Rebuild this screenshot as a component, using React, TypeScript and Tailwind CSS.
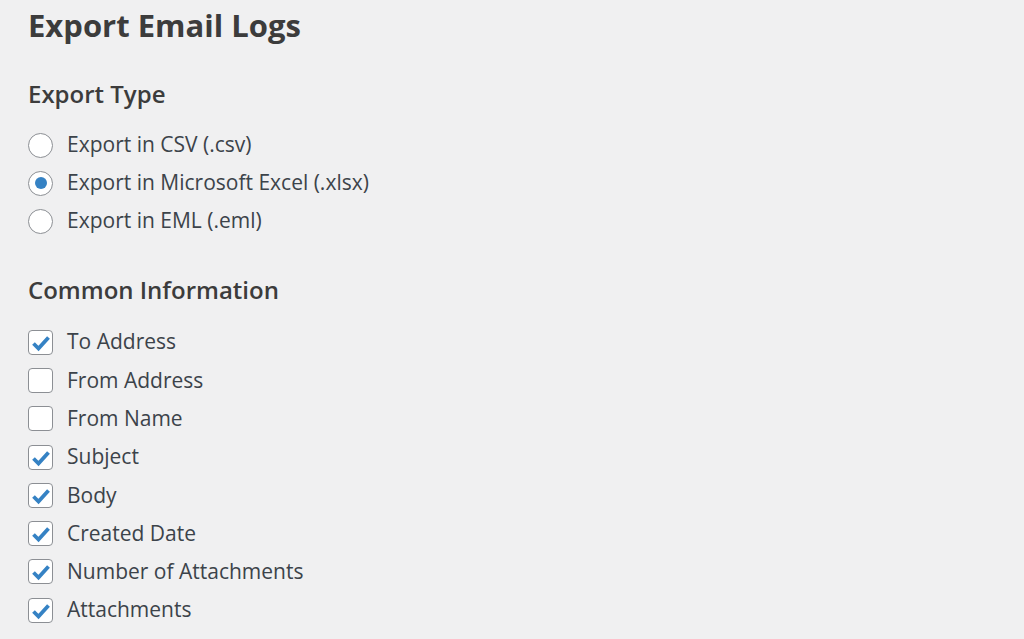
const exportTypes = [
  { id: 'csv', label: 'Export in CSV (.csv)' },
  { id: 'xlsx', label: 'Export in Microsoft Excel (.xlsx)' },
  { id: 'eml', label: 'Export in EML (.eml)' },
];

const commonFields = [
  { label: 'To Address', checked: true },
  { label: 'From Address', checked: false },
  { label: 'From Name', checked: false },
  { label: 'Subject', checked: true },
  { label: 'Body', checked: true },
  { label: 'Created Date', checked: true },
  { label: 'Number of Attachments', checked: true },
  { label: 'Attachments', checked: true },
];

function Radio({ checked }: { checked: boolean }) {
  return (
    <span className="w-[25px] h-[25px] rounded-full border border-[#8c8f94] bg-white flex items-center justify-center shrink-0">
      {checked && <span className="w-[12px] h-[12px] rounded-full bg-[#3582c4]" />}
    </span>
  );
}

function Checkbox({ checked }: { checked: boolean }) {
  return (
    <span className="w-[25px] h-[25px] rounded-[4px] border border-[#8c8f94] bg-white flex items-center justify-center shrink-0">
      {checked && (
        <svg width="20" height="20" viewBox="0 0 20 20" className="mt-[1px]">
          <path d="M2.5 10.5 L7.5 15.5 L17.5 4.5" fill="none" stroke="#3582c4" strokeWidth="3.8" strokeLinejoin="miter" strokeLinecap="butt" />
        </svg>
      )}
    </span>
  );
}

export default function App() {
  return (
    <div
      className="w-[1024px] h-[639px] overflow-hidden bg-[#f0f0f1] text-[#3c434a] px-[28px] pt-[1px]"
      style={{ fontFamily: '"Open Sans", "Noto Sans", sans-serif' }}
    >
      <h1 className="text-[31px] font-bold leading-[48px] text-[#3c3c3c]">Export Email Logs</h1>

      <h2 className="mt-[29px] text-[24px] font-semibold leading-[32px] text-[#3c3c3c]">Export Type</h2>
      <div className="mt-[16px] flex flex-col">
        {exportTypes.map(t => (
          <label key={t.id} className="flex items-center gap-[14px] h-[38px] text-[21px]">
            <Radio checked={t.id === 'xlsx'} />
            <span>{t.label}</span>
          </label>
        ))}
      </div>

      <h2 className="mt-[34px] text-[24px] font-semibold leading-[32px] text-[#3c3c3c]">Common Information</h2>
      <div className="mt-[17px] flex flex-col">
        {commonFields.map(f => (
          <label key={f.label} className="flex items-center gap-[14px] h-[38.3px] text-[21px]">
            <Checkbox checked={f.checked} />
            <span>{f.label}</span>
          </label>
        ))}
      </div>
    </div>
  );
}
